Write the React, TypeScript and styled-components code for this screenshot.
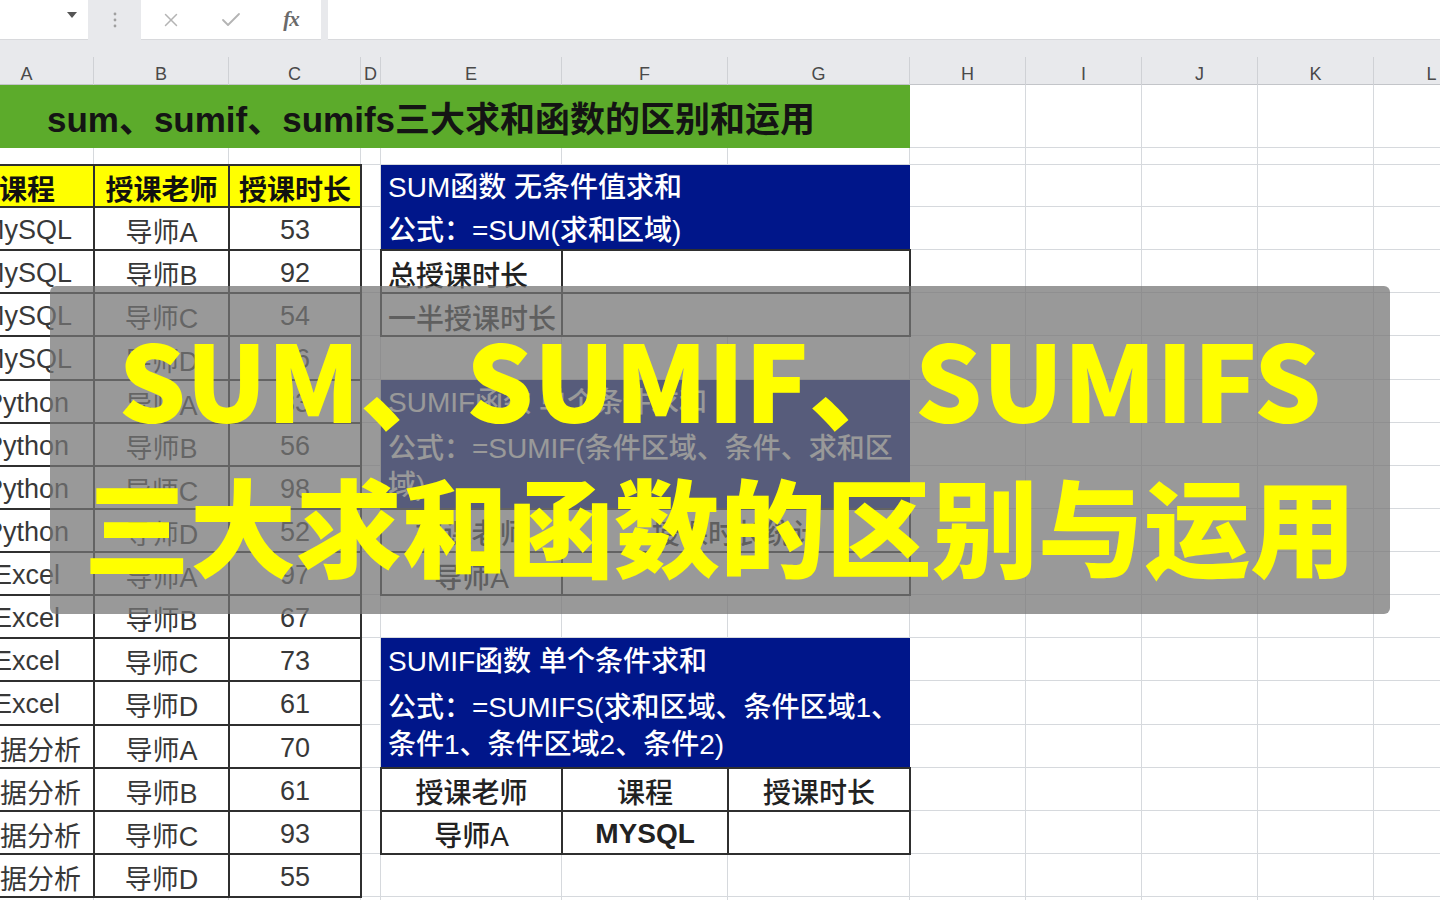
import React from 'react'
import styled, { createGlobalStyle } from 'styled-components'
import { X, Check } from 'lucide-react'

const GlobalStyle = createGlobalStyle`
  html, body {
    margin: 0;
    padding: 0;
    background: #fff;
  }
  body {
    width: 1440px;
    height: 900px;
    overflow: hidden;
    font-family: 'Liberation Sans', 'Noto Sans CJK SC', sans-serif;
  }
`

// A is scrolled partly out of view, so the grid starts 40px left of the window
const COLS = '134px 135px 132px 20px 181px 166px 182px 116px 116px 116px 116px 116px 116px'
const ROWS = '63px 17px 42px repeat(17, 43.125px)'
const COL_COUNT = 13
const ROW_COUNT = 20

const Toolbar = styled.div`
  height: 57px;
  background: #e8e9ec;
  display: flex;
  align-items: flex-start;
`

const NameBox = styled.div`
  width: 88px;
  height: 40px;
  background: #fff;
  display: flex;
  align-items: center;
  justify-content: flex-end;
  padding-right: 11px;
  box-sizing: border-box;
  border-bottom: 1px solid #d8d9dc;
`

const Caret = styled.span`
  width: 0;
  height: 0;
  margin-bottom: 10px;
  border-left: 5px solid transparent;
  border-right: 5px solid transparent;
  border-top: 6px solid #555;
`

const Grip = styled.div`
  width: 53px;
  height: 40px;
  display: flex;
  align-items: center;
  justify-content: center;
`

const FxBox = styled.div`
  width: 180px;
  height: 40px;
  background: #fff;
  display: flex;
  border-bottom: 1px solid #d8d9dc;
  box-sizing: border-box;
`

const FxSlot = styled.div`
  width: 60px;
  display: flex;
  align-items: center;
  justify-content: center;
  color: #b4b4b4;
`

const FxLabel = styled.span`
  font-family: 'Liberation Serif', serif;
  font-style: italic;
  font-weight: 700;
  font-size: 21px;
  color: #6a6a6a;
  letter-spacing: -1px;
`

const FormulaInput = styled.div`
  flex: 1;
  height: 40px;
  margin-left: 7px;
  background: #fff;
  border-bottom: 1px solid #d8d9dc;
  box-sizing: border-box;
`

const Viewport = styled.div`
  position: relative;
  width: 1440px;
  height: 843px;
  overflow: hidden;
`

const ColumnBar = styled.div`
  display: grid;
  grid-template-columns: ${COLS};
  height: 28px;
  margin-left: -40px;
  background: #e8e9ec;
  border-bottom: 1px solid #c3c5c9;
  box-sizing: border-box;
`

const ColLetter = styled.div`
  display: flex;
  align-items: center;
  justify-content: center;
  border-right: 1px solid #cfd1d5;
  font-family: 'Liberation Sans', sans-serif;
  font-size: 18px;
  color: #4a4a4a;
  padding-top: 7px;
`

const Layers = styled.div`
  display: grid;
  margin-left: -40px;
`

const Lines = styled.div`
  grid-area: 1 / 1;
  display: grid;
  grid-template-columns: ${COLS};
  grid-template-rows: ${ROWS};
`

const GridCell = styled.div`
  border-right: 1px solid #d6d9dd;
  border-bottom: 1px solid #d6d9dd;
`

const Content = styled.div`
  grid-area: 1 / 1;
  display: grid;
  grid-template-columns: ${COLS};
  grid-template-rows: ${ROWS};
`

type Pos = { $col: number; $row: number; $span?: number; $rows?: number }

const Placed = styled.div<Pos>`
  grid-column: ${p => p.$col} / span ${p => p.$span ?? 1};
  grid-row: ${p => p.$row} / span ${p => p.$rows ?? 1};
  display: flex;
  align-items: center;
  min-width: 0;
  box-sizing: border-box;
`

const TitleCell = styled(Placed)`
  background: #5cab2b;
  justify-content: center;
  padding-right: 8px;
  font-size: 35px;
  font-weight: 700;
  color: #141414;
  white-space: nowrap;
`

type BoxProps = { $fill?: string; $left?: boolean; $weight?: number; $size?: number; $ink?: string }

const BoxCell = styled(Placed)<BoxProps>`
  position: relative;
  z-index: 1;
  margin: -1px;
  border: 2px solid #2f2f2f;
  background: ${p => p.$fill ?? '#fff'};
  justify-content: ${p => (p.$left ? 'flex-start' : 'center')};
  padding: 4px 0 0 ${p => (p.$left ? '6px' : '0')};
  font-size: ${p => p.$size ?? 27}px;
  font-weight: ${p => p.$weight ?? 400};
  color: ${p => p.$ink ?? '#383838'};
  white-space: nowrap;
`

const BlueCell = styled(Placed)`
  position: relative;
  z-index: 1;
  background: #00168a;
  color: #fff;
  font-size: 28px;
  font-weight: 500;
  line-height: 37px;
  padding: 3px 6px 0 7px;
`

const Overlay = styled.div`
  position: absolute;
  left: 50px;
  top: 229px;
  width: 1340px;
  height: 328px;
  border-radius: 6px;
  background: rgba(117, 117, 117, 0.74);
  z-index: 5;
  display: flex;
  flex-direction: column;
  align-items: center;
  justify-content: center;
`

const BigLine = styled.div`
  font-family: 'Noto Sans CJK SC', sans-serif;
  font-weight: 900;
  font-size: 106px;
  line-height: 146px;
  color: #ffff00;
  white-space: nowrap;
`

const letters = ['A', 'B', 'C', 'D', 'E', 'F', 'G', 'H', 'I', 'J', 'K', 'L', 'M']

const courses: [string, string, string][] = [
  ['MySQL', '导师A', '53'],
  ['MySQL', '导师B', '92'],
  ['MySQL', '导师C', '54'],
  ['MySQL', '导师D', '86'],
  ['Python', '导师A', '83'],
  ['Python', '导师B', '56'],
  ['Python', '导师C', '98'],
  ['Python', '导师D', '52'],
  ['Excel', '导师A', '97'],
  ['Excel', '导师B', '67'],
  ['Excel', '导师C', '73'],
  ['Excel', '导师D', '61'],
  ['数据分析', '导师A', '70'],
  ['数据分析', '导师B', '61'],
  ['数据分析', '导师C', '93'],
  ['数据分析', '导师D', '55'],
]

const GripDots = () => (
  <svg width="6" height="18" viewBox="0 0 6 18">
    <circle cx="3" cy="3" r="1.4" fill="#a0a0a0" />
    <circle cx="3" cy="9" r="1.4" fill="#a0a0a0" />
    <circle cx="3" cy="15" r="1.4" fill="#a0a0a0" />
  </svg>
)

const App = () => {
  return (
    <>
      <GlobalStyle />
      <Toolbar>
        <NameBox>
          <Caret />
        </NameBox>
        <Grip>
          <GripDots />
        </Grip>
        <FxBox>
          <FxSlot>
            <X size={22} strokeWidth={1.6} />
          </FxSlot>
          <FxSlot>
            <Check size={24} strokeWidth={1.8} />
          </FxSlot>
          <FxSlot>
            <FxLabel>fx</FxLabel>
          </FxSlot>
        </FxBox>
        <FormulaInput />
      </Toolbar>

      <Viewport>
        <ColumnBar>
          {letters.map(l => (
            <ColLetter key={l}>{l}</ColLetter>
          ))}
        </ColumnBar>

        <Layers>
          <Lines>
            {Array.from({ length: COL_COUNT * ROW_COUNT }, (_, i) => (
              <GridCell key={i} />
            ))}
          </Lines>

          <Content>
            <TitleCell $col={1} $row={1} $span={7}>
              sum、sumif、sumifs三大求和函数的区别和运用
            </TitleCell>

            <BoxCell $col={1} $row={3} $fill="#ffff00" $weight={700} $size={28} $ink="#111">课程</BoxCell>
            <BoxCell $col={2} $row={3} $fill="#ffff00" $weight={700} $size={28} $ink="#111">授课老师</BoxCell>
            <BoxCell $col={3} $row={3} $fill="#ffff00" $weight={700} $size={28} $ink="#111">授课时长</BoxCell>

            {courses.map(([course, teacher, hours], i) => (
              <React.Fragment key={i}>
                <BoxCell $col={1} $row={4 + i}>{course}</BoxCell>
                <BoxCell $col={2} $row={4 + i}>{teacher}</BoxCell>
                <BoxCell $col={3} $row={4 + i}>{hours}</BoxCell>
              </React.Fragment>
            ))}

            <BlueCell $col={5} $row={3} $span={3}>SUM函数 无条件值求和</BlueCell>
            <BlueCell $col={5} $row={4} $span={3}>公式：=SUM(求和区域)</BlueCell>
            <BoxCell $col={5} $row={5} $left $size={28} $weight={500} $ink="#222">总授课时长</BoxCell>
            <BoxCell $col={6} $row={5} $span={2} />
            <BoxCell $col={5} $row={6} $left $size={28} $weight={500} $ink="#222">一半授课时长</BoxCell>
            <BoxCell $col={6} $row={6} $span={2} />

            <BlueCell $col={5} $row={8} $span={3}>SUMIF函数 单个条件求和</BlueCell>
            <BlueCell $col={5} $row={9} $span={3} $rows={2}>公式：=SUMIF(条件区域、条件、求和区域)</BlueCell>
            <BoxCell $col={5} $row={11} $size={28} $weight={500} $ink="#222">授课老师</BoxCell>
            <BoxCell $col={6} $row={11} $span={2} $size={28} $weight={500} $ink="#222">授课时长统计</BoxCell>
            <BoxCell $col={5} $row={12} $size={28} $weight={500} $ink="#222">导师A</BoxCell>
            <BoxCell $col={6} $row={12} $span={2} />

            <BlueCell $col={5} $row={14} $span={3}>SUMIF函数 单个条件求和</BlueCell>
            <BlueCell $col={5} $row={15} $span={3} $rows={2}>
              公式：=SUMIFS(求和区域、条件区域1、条件1、条件区域2、条件2)
            </BlueCell>
            <BoxCell $col={5} $row={17} $size={28} $weight={500} $ink="#222">授课老师</BoxCell>
            <BoxCell $col={6} $row={17} $size={28} $weight={500} $ink="#222">课程</BoxCell>
            <BoxCell $col={7} $row={17} $size={28} $weight={500} $ink="#222">授课时长</BoxCell>
            <BoxCell $col={5} $row={18} $size={28} $weight={500} $ink="#222">导师A</BoxCell>
            <BoxCell $col={6} $row={18} $size={28} $weight={700} $ink="#222">MYSQL</BoxCell>
            <BoxCell $col={7} $row={18} />
          </Content>
        </Layers>

        <Overlay>
          <BigLine>SUM、SUMIF、SUMIFS</BigLine>
          <BigLine>三大求和函数的区别与运用</BigLine>
        </Overlay>
      </Viewport>
    </>
  )
}

export default App
